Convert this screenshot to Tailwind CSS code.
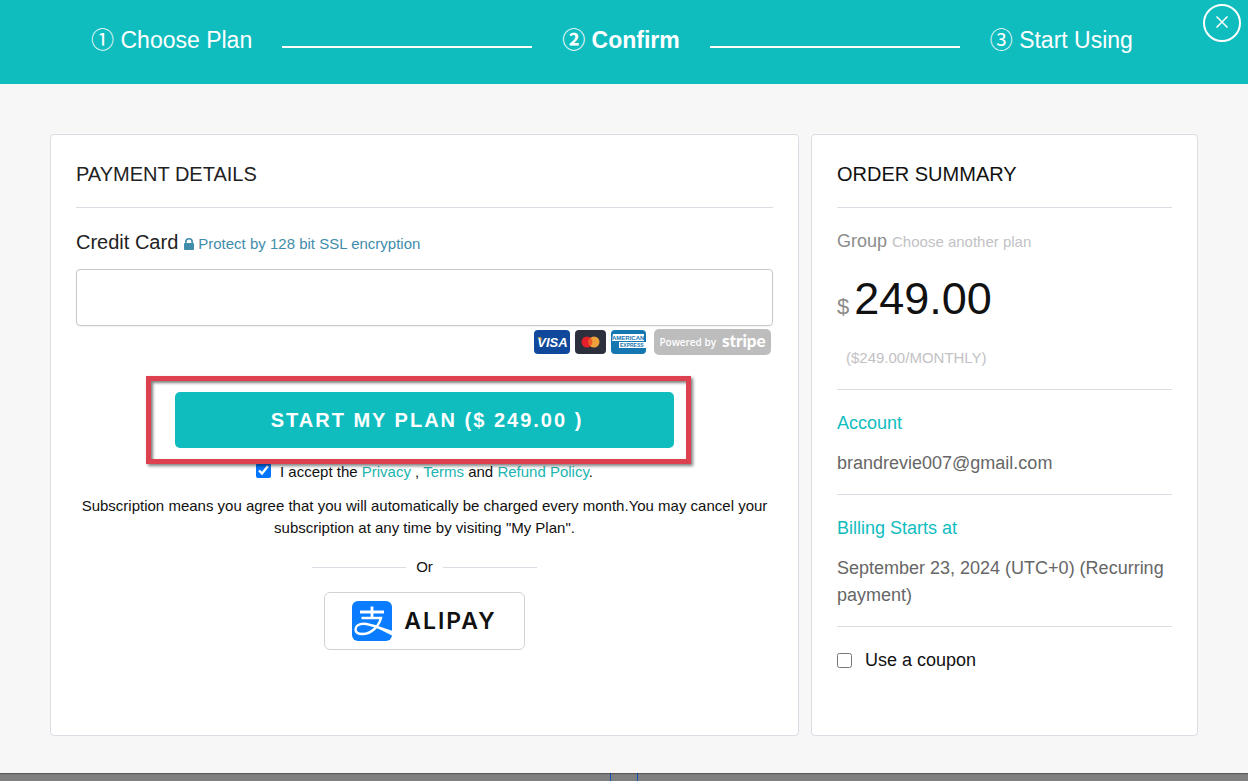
<!DOCTYPE html>
<html lang="en">
<head>
    <meta charset="UTF-8">
    <meta name="viewport" content="width=device-width, initial-scale=1.0">
    <title>Confirm Plan</title>
    <script src="https://cdn.jsdelivr.net/npm/@tailwindcss/browser@4"></script>
</head>
<body class="min-h-screen flex flex-col bg-[#808080] font-['Liberation_Sans','Noto_Sans_CJK_SC',sans-serif] text-[15px] text-[#111]">
    <div class="relative bg-[#f7f7f7] shadow-[0_1px_1px_rgba(0,0,0,0.3)]">
        <!-- steps -->
        <header class="h-21 bg-[#0fbdbf] text-white">
            <ol class="flex h-20 items-center justify-center gap-[30px] pr-6 text-[23px] whitespace-nowrap">
                <li>① Choose Plan</li>
                <li class="mt-[13px] h-[2px] w-[250px] bg-white" aria-hidden="true"></li>
                <li class="font-bold">② Confirm</li>
                <li class="mt-[13px] h-[2px] w-[250px] bg-white" aria-hidden="true"></li>
                <li>③ Start Using</li>
            </ol>
            <button type="button" aria-label="Close" class="absolute top-1 right-[7px] flex size-[38px] items-center justify-center rounded-full border-2 border-white">
                <svg class="mb-[2px] size-3" viewBox="0 0 12 12" fill="none" stroke="currentColor" stroke-width="1.5"><path d="M.5.5l11 11M11.5.5l-11 11"/></svg>
            </button>
        </header>

        <main class="flex gap-3 px-[50px] pt-[50px] pb-[37px]">
            <!-- payment -->
            <section class="min-h-[602px] flex-1 rounded border border-[#dcdce4] bg-white px-[25px]">
                <h2 class="border-b border-[#dcdce4] pt-[25px] pb-[19px] text-[20px] leading-7 text-[#222]">PAYMENT DETAILS</h2>
                <form>
                    <div class="flex items-baseline pt-5 leading-7">
                        <label for="card" class="text-[20px] text-[#222]">Credit Card</label>
                        <span class="flex items-baseline text-[#3f8dab]">
                            <svg class="mr-1 ml-[6px] h-3 w-[10px] translate-y-[1px]" viewBox="0 0 10 12" fill="currentColor"><path d="M1 5V4a4 4 0 0 1 8 0v1a1 1 0 0 1 1 1v5a1 1 0 0 1-1 1H1a1 1 0 0 1-1-1V6a1 1 0 0 1 1-1zm1.600 0h4.800V4a2.400 2.400 0 0 0-4.800 0z"/></svg>
                            Protect by 128 bit SSL encryption
                        </span>
                    </div>
                    <input id="card" type="text" class="mt-[11px] block h-[57px] w-full rounded border border-[#c8c8c8] bg-white px-4 shadow-xs outline-none">
                    <div class="mt-[3px] flex items-center justify-end gap-[5px] pr-[2px]">
                        <svg class="h-6 w-9" viewBox="0 0 36 24" role="img" aria-label="Visa"><rect width="36" height="24" rx="4" fill="#10499c"/><text x="18.500" y="16.500" text-anchor="middle" fill="#fff" font-family="Liberation Sans" font-size="13" font-weight="700" font-style="italic">VISA</text><path d="M3 7.200h4l1.500 4-2.500-2.800z" fill="#f2a62c"/></svg>
                        <svg class="h-6 w-[31px]" viewBox="0 0 31 24" role="img" aria-label="Mastercard"><rect width="31" height="24" rx="4" fill="#2b303c"/><circle cx="12" cy="12" r="5.500" fill="#e3202a"/><circle cx="19" cy="12" r="5.500" fill="#eda13a"/><path d="M15.500 7.800a5.500 5.500 0 0 1 0 8.400a5.500 5.500 0 0 1 0-8.400" fill="#ee5a24"/></svg>
                        <svg class="h-6 w-[35px]" viewBox="0 0 35 24" role="img" aria-label="American Express"><rect width="35" height="24" rx="4" fill="#1577b1"/><path d="M2 4h31v7H1zM8 12h27v6H8z" fill="#fff"/><g fill="#1577b1" font-family="Liberation Sans" font-weight="700"><text x="1" y="10" font-size="6">AMERICAN</text><text x="9" y="17" font-size="5">EXPRESS</text></g></svg>
                        <span class="ml-[3px] flex h-[26px] w-[117px] items-center justify-center gap-[6px] rounded-[5px] bg-[#bdbdbd] text-white">
                            <span class="font-['Open_Sans',sans-serif] text-[10px] font-semibold">Powered by</span><span class="pb-[2px] font-['Lato',sans-serif] text-[17px] leading-5 font-black">stripe</span>
                        </span>
                    </div>
                    <div class="relative mx-auto mt-[37px] w-[499px] max-w-full">
                        <button type="submit" class="h-14 w-full rounded-[5px] bg-[#0fbdbf] pl-[5px] text-[20px] font-bold tracking-[2px] text-white">START MY PLAN ($ 249.00 )</button>
                        <span class="pointer-events-none absolute -top-4 -right-[17px] -bottom-4 -left-[29px] border-[5px] border-[#dd404f] shadow-[2px_2px_3px_rgba(0,0,0,0.5),inset_2px_2px_3px_rgba(0,0,0,0.5)]"></span>
                    </div>
                    <div class="mt-3 flex items-center justify-center leading-6">
                        <input id="accept" type="checkbox" checked class="mr-[9px] mb-[3px] size-[15px] accent-[#0075ff]">
                        <label for="accept">I accept the <a href="#" class="text-[#20b5b0]">Privacy</a> , <a href="#" class="text-[#20b5b0]">Terms</a> and <a href="#" class="text-[#20b5b0]">Refund Policy</a>.</label>
                    </div>
                    <p class="mt-[11px] text-center leading-[22px]">Subscription means you agree that you will automatically be charged every month.You may cancel your subscription at any time by visiting "My Plan".</p>
                    <div class="mx-auto mt-4 flex w-[225px] items-center gap-[10px] leading-6 before:h-px before:flex-1 before:bg-[#dcdce4] after:h-px after:flex-1 after:bg-[#dcdce4]">Or</div>
                    <button type="button" class="mx-auto mt-[13px] flex h-[58px] w-[201px] items-center justify-center gap-3 rounded-md border border-[#d2d2d4] bg-white font-['Inter',sans-serif] text-[23px] font-semibold tracking-[2px]">
                        <svg class="size-10" viewBox="0 0 40 40" fill="none"><rect width="40" height="40" rx="6" fill="#0a7cff"/><path d="M8 11h24M20 5.500v11" stroke="#fff" stroke-width="2.800"/><path d="M9.500 17h19.500C27 25 19.500 33 10.500 33C5.500 33 3.500 30.800 3.500 28.200C3.500 25 7 22.800 11.500 22.800C18 22.800 26 26.500 40 31" stroke="#fff" stroke-width="2.400"/><path d="M20 24.500L40 30v4.500z" fill="#fff"/></svg>
                        ALIPAY
                    </button>
                </form>
            </section>

            <!-- summary -->
            <aside class="w-[387px] rounded border border-[#dcdce4] bg-white px-[25px] text-[18px]">
                <h2 class="border-b border-[#dcdce4] pt-[25px] pb-[19px] text-[20px] leading-7">ORDER SUMMARY</h2>
                <div class="border-b border-[#dcdce4] pt-5 pb-5 text-[#8c8c8c]">
                    <p class="leading-[27px]">Group <a href="#" class="text-[15px] text-[#c2c2c4]">Choose another plan</a></p>
                    <p class="mt-[14px] flex items-baseline gap-[5px] text-[22px] leading-[60px]">$<span class="text-[45px] text-[#111]">249.00</span></p>
                    <p class="mt-[10px] pl-[9px] text-[15px] leading-[22px] text-[#c2c2c4]">($249.00/MONTHLY)</p>
                </div>
                <div class="border-b border-[#dcdce4] pt-5 pb-[17px] leading-[27px]">
                    <h3 class="text-[#0fbdbf]">Account</h3>
                    <p class="mt-[13px] text-[#666]">brandrevie007@gmail.com</p>
                </div>
                <div class="border-b border-[#dcdce4] pt-5 pb-[17px] leading-[27px]">
                    <h3 class="text-[#0fbdbf]">Billing Starts at</h3>
                    <p class="mt-[13px] text-[#666]">September 23, 2024 (UTC+0) (Recurring payment)</p>
                </div>
                <div class="flex items-center gap-[13px] pt-5 leading-[27px]">
                    <input id="coupon" type="checkbox" class="size-[15px]">
                    <label for="coupon">Use a coupon</label>
                </div>
            </aside>
        </main>
    </div>
    <!-- page behind the dialog -->
    <div class="mx-auto flex w-[28px] flex-1 justify-between">
        <span class="w-px bg-[#1450b8]"></span>
        <span class="w-px bg-[#1450b8]"></span>
    </div>
</body>
</html>
